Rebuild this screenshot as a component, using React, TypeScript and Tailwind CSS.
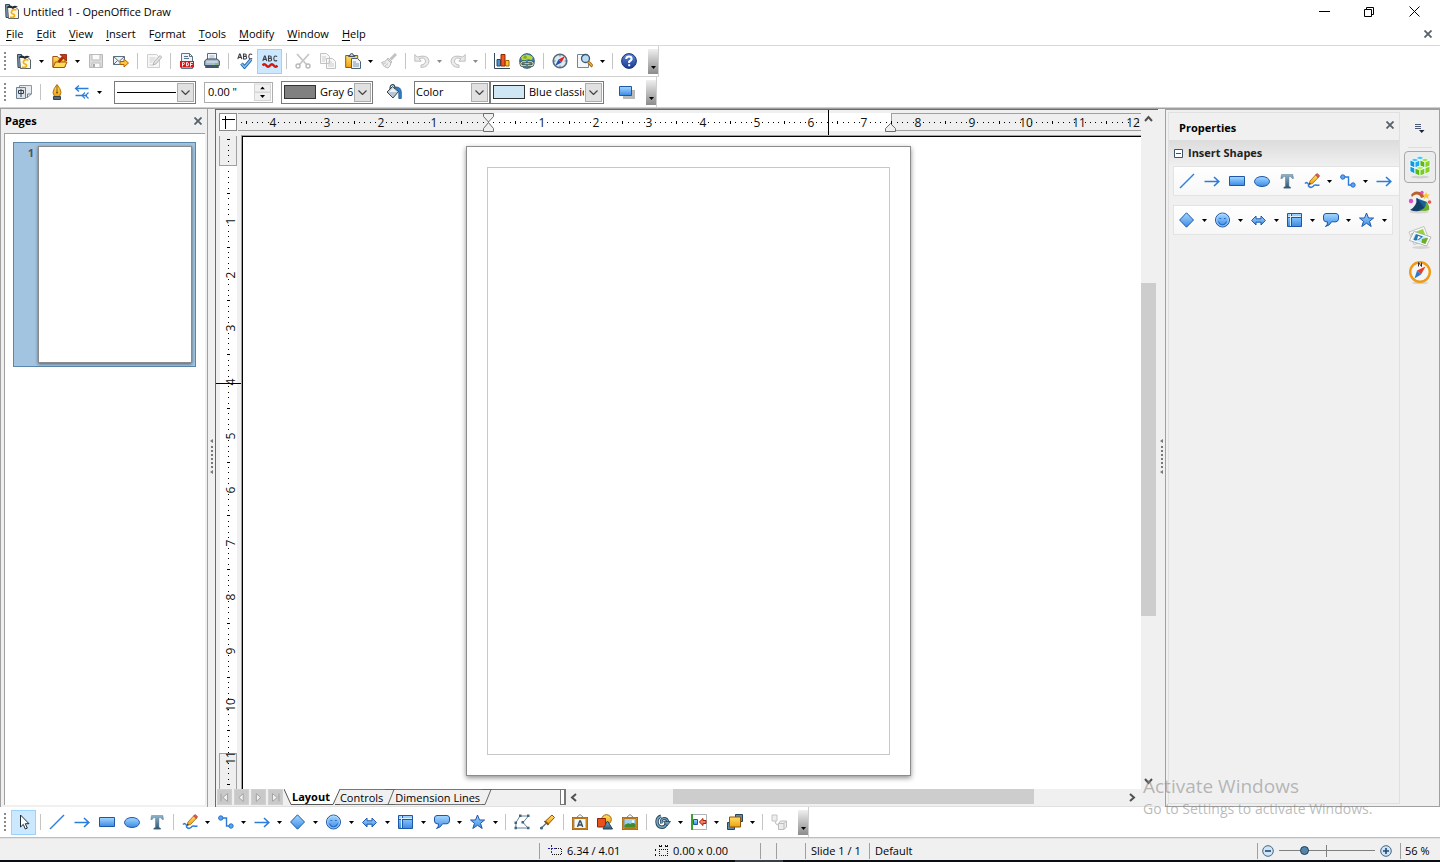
import { Fragment, type ReactNode } from "react";

const BLUE = "url(#blueFill)";
const EDGE = "#1f57a8";

function Svg({ children, size = 16, box = 16 }: { children: ReactNode; size?: number; box?: number }) {
  return (
    <svg width={size} height={size} viewBox={`0 0 ${box} ${box}`} fill="none" className="block shrink-0" aria-hidden="true">
      {children}
    </svg>
  );
}

function Defs() {
  return (
    <svg width="0" height="0" className="absolute" aria-hidden="true">
      <defs>
        <linearGradient id="blueFill" x1="0" y1="0" x2="0" y2="1">
          <stop offset="0" stopColor="#a5d8ff" />
          <stop offset="1" stopColor="#3b8ae6" />
        </linearGradient>
        <linearGradient id="goldFill" x1="0" y1="0" x2="0" y2="1">
          <stop offset="0" stopColor="#ffe066" />
          <stop offset="1" stopColor="#f0a010" />
        </linearGradient>
        <linearGradient id="slateFill" x1="0" y1="0" x2="0" y2="1">
          <stop offset="0" stopColor="#8fb4cc" />
          <stop offset="1" stopColor="#2c5470" />
        </linearGradient>
        <linearGradient id="navyFill" x1="0" y1="0" x2="0" y2="1">
          <stop offset="0" stopColor="#5d86d8" />
          <stop offset="1" stopColor="#173b94" />
        </linearGradient>
      </defs>
    </svg>
  );
}

const icons = {
  draw: (
    <>
      <path d="M1.500 1.500h4v13h-3.500z" fill="#7f9cb4" stroke="#35495a" />
      <path d="M3.500 4.500h8.500l2.500 2.500v8.500h-10z" fill="#fff8e0" stroke="#56626d" />
      <path d="M2.500 5q1-3 4-2.500 1.500.3 2 1Q11 2 14 4q-3 0-5 2Q6 3.500 2.500 5z" fill="#1f2b36" />
      <path d="M12.500 7q-4-1-5 1.500-.5 2 1.500 2.500 2.500 1 1 2.700-2 1.300-4 .3" stroke="#f5ad16" strokeWidth="1.700" />
    </>
  ),
  open: (
    <>
      <path d="M.8 14V3.500h4.700l1.200 1.700H13V14z" fill="url(#goldFill)" stroke="#a3520a" />
      <path d="M1 14.500L3.500 9h11.500L12.500 14.500z" fill="#ffd95a" stroke="#a3520a" />
      <path d="M6.500 9L11 4.500" stroke="#a82a06" strokeWidth="2.600" />
      <path d="M8 1.500h6.500V8z" fill="#c8390c" stroke="#8c1d04" strokeWidth=".8" />
    </>
  ),
  save: (
    <>
      <path d="M1.500 1.500h13v13h-13z" fill="#dcdcdc" stroke="#b8b8b8" />
      <path d="M4 1.500h8V7H4zM4 10h8v4.500H4z" fill="#fafafa" stroke="#bdbdbd" />
      <path d="M6 11v3" stroke="#aaa" strokeWidth="2" />
    </>
  ),
  mail: (
    <>
      <path d="M.5 3.500h11v8H.5z" fill="#edf2f6" stroke="#5c6f7f" />
      <path d="M.5 3.500L6 8.500l5.500-5M.5 11.500L4.500 7.500" stroke="#5c6f7f" />
      <path d="M7 8.500h4V6l4.500 4-4.500 4v-2.500H7z" fill="#ffc636" stroke="#b5600c" />
    </>
  ),
  edit: (
    <>
      <path d="M1.500 1.500h9l3 3v10h-12z" fill="#f7f7f7" stroke="#cfcfcf" />
      <path d="M3.500 5h6M3.500 7h5M3.500 9h3M3.500 12h4" stroke="#cfcfcf" />
      <path d="M7 12l1-3L14 2.500l1.800 1.800L9.800 11z" fill="#e2e2e2" stroke="#b3b3b3" />
    </>
  ),
  pdf: (
    <>
      <path d="M2.500.5h8l3 3v12h-11z" fill="#eef3f7" stroke="#5f7488" />
      <path d="M10.500.5v3h3M5 3.500h4M5 5.500h5" stroke="#5f7488" />
      <path d="M1 8h14v6.500H1z" fill="#dd1414" />
      <path d="M3.500 13.500v-4h1q1 0 1 1t-1 1h-1M7.500 9.500v3.500q2.500 0 2-2T7.500 9.500zM11.500 13.500v-4h2.500M11.500 11.500h2" stroke="#fff" strokeWidth=".9" />
    </>
  ),
  print: (
    <>
      <path d="M3.500.5h9V7h-9z" fill="#f6f9fb" stroke="#586e80" />
      <path d="M5.500 3h5M5.500 5h5" stroke="#9cb3c3" />
      <path d="M.7 8l2-2h10.600l2 2v4.500H.7z" fill="#a9bbc8" stroke="#34495a" />
      <path d="M1.200 12h13.600v3H1.200z" fill="#40566a" />
      <path d="M11 11h3" stroke="#63d420" strokeWidth="1.400" />
      <path d="M2.500 9h11" stroke="#e4ecf2" />
    </>
  ),
  spell: (
    <>
      <path d="M.8 6l1.700-5h.6l1.700 5M1.300 4.400h3M6.500 1v5h1.800q1.300 0 1.300-1.400T8.300 3.400H6.500h1.600q1.100 0 1.100-1.200T8 1zM15.200 1.600q-3.200-1.700-3.400 1.900.2 3.400 3.400 1.900" stroke="#3c3f49" strokeWidth="1.100" />
      <path d="M4.500 10.500l3 3.500 6.500-7.500" stroke="#1f62a8" strokeWidth="3.400" />
      <path d="M4.500 10.500l3 3.500 6.500-7.500" stroke="#7cc0f4" strokeWidth="1.500" />
    </>
  ),
  autospell: (
    <>
      <path d="M.8 8l1.700-5h.6l1.700 5M1.300 6.400h3M6.500 3v5h1.800q1.300 0 1.300-1.400T8.300 5.400H6.500h1.600q1.100 0 1.100-1.200T8 3zM15.200 3.600q-3.200-1.700-3.400 1.900.2 3.400 3.400 1.900" stroke="#3c3f49" strokeWidth="1.100" />
      <path d="M.5 12.500q1.900-2.500 3.750 0t3.750 0 3.750 0 3.750 0" stroke="#d21a10" strokeWidth="2.400" />
    </>
  ),
  cut: (
    <>
      <path d="M2 1l10 11M14 1L4 12" stroke="#c6c6c6" strokeWidth="1.800" />
      <circle cx="3" cy="13" r="2" stroke="#b8b8b8" strokeWidth="1.400" />
      <circle cx="13" cy="13" r="2" stroke="#b8b8b8" strokeWidth="1.400" />
    </>
  ),
  copy: (
    <>
      <path d="M.5.5h6l3 3v7h-9zM6.500 5.500h6l3 3v7h-9z" fill="#f8f8f8" stroke="#c2c2c2" />
      <path d="M2 4h4M2 6h4M2 8h3M8 9h4M8 11h6M8 13h6" stroke="#cdcdcd" />
    </>
  ),
  paste: (
    <>
      <path d="M.7 2.500h12v12H.7z" fill="url(#goldFill)" stroke="#8d5b0b" />
      <path d="M3.500 3.500v-1h1.500q0-2 1.700-2t1.700 2h1.600v1z" fill="#c7ced3" stroke="#4a5661" />
      <path d="M6.500 5.500h6l3 3v7h-9z" fill="#f1f5f9" stroke="#4b6478" />
      <path d="M8 9h3M8 11h6M8 13h6" stroke="#7e97ab" />
    </>
  ),
  brush: (
    <>
      <path d="M15 1L9.500 6.500" stroke="#c2c2c2" strokeWidth="3" />
      <path d="M7 5l4 4-2 1-3-3.500z" fill="#dedede" stroke="#bbb" />
      <path d="M6.500 6.500Q3 9 .5 9.500 3 15 7 15q2.500-2 3-5z" fill="#ededed" stroke="#bdbdbd" />
      <path d="M2 11l3-1.500M4 13l3-2.500" stroke="#c4c4c4" />
    </>
  ),
  undo: (
    <path d="M.8 1.500v6.700h6.500L5 5.800Q11 3.500 11.500 8q0 3.500-4.500 4v2.500q8-.5 8-6.700Q14 1 3.200 4z" fill="#eaeaea" stroke="#bfbfbf" />
  ),
  redo: (
    <path d="M15.200 1.500v6.700H8.700L11 5.800Q5 3.500 4.500 8q0 3.500 4.500 4v2.500q-8-.5-8-6.700Q2 1 12.800 4z" fill="#eaeaea" stroke="#bfbfbf" />
  ),
  chart: (
    <>
      <path d="M.5 0v15.500H16" stroke="#33485a" />
      <path d="M3 6.500h3.500V13H3z" fill="#4a8fc6" stroke="#1f4a72" />
      <path d="M7 1.500h4V13H7z" fill="#ea5a1d" stroke="#8f2606" />
      <path d="M11.500 7.500H15V13h-3.500z" fill="#ffc32b" stroke="#a36508" />
    </>
  ),
  globe: (
    <>
      <circle cx="8" cy="8" r="7.300" fill="#4685b4" stroke="#27567c" />
      <path d="M2 4q5-5 12 0l-1.500 3L9 6 6 7.500 3 7z" fill="#b9d63c" />
      <path d="M6 2l2 2-1 2-3-1z" fill="#7fa726" />
      <path d="M7 8.800H3.500q-1.700.4-1.700 2t1.700 2H7M9 8.800h3.500q1.700.4 1.700 2t-1.700 2H9M5.500 10.800h5" stroke="#2f4a3a" strokeWidth="2.600" />
      <path d="M7 8.800H3.500q-1.700.4-1.700 2t1.700 2H7M9 8.800h3.500q1.700.4 1.700 2t-1.700 2H9M5.500 10.800h5" stroke="#e6f0d2" strokeWidth="1.100" />
    </>
  ),
  compass: (
    <>
      <circle cx="8" cy="8" r="6.800" fill="#dfe9f0" stroke="#566c80" strokeWidth="1.600" />
      <path d="M8 2v1.500M8 12.500V14M2 8h1.500M12.500 8H14" stroke="#566c80" />
      <path d="M13 3L6.500 6.500l3 3z" fill="#e2231a" />
      <path d="M3 13l3.500-6.500 3 3z" fill="#1e56b0" />
    </>
  ),
  find: (
    <>
      <path d="M.5 1.500h9l2 2v11h-11z" fill="#f5f8fa" stroke="#73879a" />
      <circle cx="8.500" cy="5.500" r="4" fill="#b9dcf4" stroke="#3d566c" strokeWidth="1.300" />
      <path d="M11.500 9l4 4.500" stroke="#9b5c0b" strokeWidth="3" />
      <path d="M11.500 9l3.800 4.200" stroke="#f6ba37" strokeWidth="1.200" />
    </>
  ),
  help: (
    <>
      <circle cx="8" cy="8" r="7.400" fill="url(#navyFill)" stroke="#173478" />
      <path d="M5.200 6q.2-2.500 2.800-2.500T10.700 6Q10.500 7.300 8.200 8.500v1.500M8.200 11.300v1.900" stroke="#fff" strokeWidth="2" />
    </>
  ),
  styles: (
    <>
      <path d="M3.500 1.500h12v8.500l-4 3.500h-8z" fill="#e9edf1" stroke="#8a97a3" />
      <path d="M11.500 13.500V10h4" stroke="#6c7b89" />
      <path d="M.5 3.500h9v11h-9z" fill="#dde3e9" stroke="#6e7e8c" />
      <path d="M2.500 6.500h5v3h-5zM5 5v8" stroke="#32414e" />
    </>
  ),
  pen: (
    <>
      <path d="M8 .5q3.500 4 4 8L10.500 12.500h-5L4 8.500Q4.500 4.500 8 .5z" fill="url(#goldFill)" stroke="#b06f0a" />
      <path d="M8 1.500v6" stroke="#6e480c" strokeWidth=".8" />
      <circle cx="8" cy="8.500" r="1" fill="#6e480c" />
      <path d="M4.500 12.500h7v3h-7z" fill="#5a6b78" stroke="#34424e" />
    </>
  ),
  arrowstyle: (
    <>
      <path d="M14.500 4.500H1.500M5 1.500l-3.500 3L5 7.500M1.500 11.500H13" stroke="#2c7cdb" strokeWidth="1.300" />
      <path d="M11 8.500l-3 3 3 3M14.500 8.500l-3 3 3 3" stroke="#2c7cdb" strokeWidth="1.100" />
    </>
  ),
  bucket: (
    <>
      <path d="M9 3q6-.5 6.300 5v6.500h-2.500V8z" fill="#2f80c8" stroke="#1d5b9b" strokeWidth=".8" />
      <path d="M1 8l5.500-5.500 6 5-5.500 6.500z" fill="#b9c6d0" stroke="#354654" />
      <path d="M3 8l4-4 4 4z" fill="#eef3f6" />
      <path d="M4 5Q4 1 6.500.7T9 5" stroke="#354654" strokeWidth="1.200" />
    </>
  ),
  shadow: (
    <>
      <path d="M4 6h12v9H4z" fill="#b9b9b9" />
      <path d="M.5 2.500h12v9H.5z" fill={BLUE} stroke={EDGE} />
    </>
  ),
  cursor: (
    <path d="M4.500 1v12l2.800-2.600 2 4.600 2-.9-2-4.400h3.700z" fill="#fff" stroke="#1e2b36" />
  ),
  line: <path d="M1 15L15 1" stroke="#2f7fdd" strokeWidth="1.400" />,
  arrow: <path d="M.5 8.500H15M10 4L14.800 8.500 10 13" stroke="#2c7cdb" strokeWidth="1.600" />,
  rect: <path d="M.5 3.500h15v9H.5z" fill={BLUE} stroke={EDGE} />,
  ellipse: <ellipse cx="8" cy="8.500" rx="7.500" ry="5" fill={BLUE} stroke={EDGE} />,
  text: (
    <path d="M2.500 1.500h11.300l.7 4h-1.300q-.8-2.200-3.300-2.200v10l1.700 1v.9H4.800v-.9l1.700-1v-10Q4 3.300 3.200 5.500H1.800z" fill="url(#slateFill)" stroke="#41677f" strokeWidth=".4" />
  ),
  pencil: (
    <>
      <path d="M1 10.500q1-1.500 2.500-.5 1.500 1 1 3 2 2.500 4.500.5 1-2 3-1.500 1 .5 3.500 0" stroke="#2c7cdb" strokeWidth="1.500" />
      <path d="M5 11.500l1-3.500 6-6.500 2.700 2.500-6.200 6.500z" fill="url(#goldFill)" stroke="#a0620b" strokeWidth=".8" />
      <path d="M11.500 2l1.700-1.500 2.500 2.300L14.200 4.500z" fill="#e75a5a" stroke="#a02c2c" strokeWidth=".6" />
      <path d="M5 11.500l.5-1.800 1.300 1.300z" fill="#222" />
    </>
  ),
  connector: (
    <>
      <path d="M3 4h5.500v8H13" stroke="#2c7cdb" strokeWidth="1.400" />
      <circle cx="2.800" cy="4" r="2.200" fill="#5aa6f2" stroke="#2a70cc" />
      <circle cx="13" cy="12" r="2.200" fill="#5aa6f2" stroke="#2a70cc" />
    </>
  ),
  diamond: <path d="M7.500.8l7 7.200-7 7.200L.6 8z" fill={BLUE} stroke={EDGE} />,
  smiley: (
    <>
      <circle cx="7.500" cy="8" r="7" fill={BLUE} stroke={EDGE} />
      <path d="M4.500 7q.8-2 1.600 0M9 7q.8-2 1.600 0M3.500 9.500q1 3.300 4 3.300t4-3.300" stroke="#1b5fc0" strokeWidth=".9" />
      <circle cx="7.500" cy="8" r="6" stroke="#c5e6ff" strokeWidth=".6" />
    </>
  ),
  dblarrow: <path d="M.6 8.500L5 4v2.800h5V4l4.400 4.500L10 13v-2.800H5V13z" fill={BLUE} stroke={EDGE} />,
  flow: (
    <>
      <path d="M.5 1.500h14v13H.5z" fill={BLUE} stroke={EDGE} />
      <path d="M4.500 1.500v13M.5 5.500h14" stroke={EDGE} />
      <path d="M3.500 2v12M1 4.500h13" stroke="#d8efff" />
    </>
  ),
  callout: (
    <path d="M3 1.500h10q2.500.3 2.500 2.500v3q-.3 2.500-2.500 2.800H8.500Q7 13.500 2.500 14.500 5 12.500 4.500 9.800H3Q.5 9.500.5 7V4Q.5 1.700 3 1.500z" fill={BLUE} stroke={EDGE} />
  ),
  star: (
    <path d="M7.500 1l2 5h5.100l-4.100 3.300 1.700 5.200-4.700-3.200-4.700 3.200 1.700-5.200L.5 6h5z" fill={BLUE} stroke={EDGE} />
  ),
  points: (
    <>
      <path d="M6 2H14.500L9 8.500 14 14H1.800L2 8.500z" stroke="#53748a" strokeWidth=".9" />
      <path d="M5 .5h2.500V3H5zM.5 7.500H3V10H.5zM.5 12.800H3v2.500H.5zM13 .5h2.500V3H13zM7.500 7H10v2.500H7.500zM13 12.800h2.500v2.500H13z" fill="#3f6680" />
    </>
  ),
  glue: (
    <>
      <path d="M2 14.500l5-5" stroke="#53748a" strokeWidth="1.300" />
      <path d="M6.500 7L13 1l2.500 2.500L9.500 10z" fill="url(#goldFill)" stroke="#8b520a" />
      <path d="M5.500 7l4 4" stroke="#7a430c" strokeWidth="1.600" />
      <circle cx="2.500" cy="14" r="1.600" fill="#3f6680" />
    </>
  ),
  fontwork: (
    <>
      <path d="M5 3l3-2.500L11 3" stroke="#888" />
      <path d="M1.200 4h13.600v11H1.200z" fill="#f3f7fa" stroke="#8a4f08" strokeWidth="2.200" />
      <path d="M1.200 4h13.600v11H1.200z" stroke="#f0a524" strokeWidth=".9" />
      <path d="M5.500 13L7.700 7h.8l2.200 6M6.500 11h3.300" stroke="#2f4f66" strokeWidth="1.400" />
    </>
  ),
  gallery: (
    <>
      <circle cx="9.500" cy="5.500" r="4.800" fill="url(#goldFill)" stroke="#a0600b" />
      <path d="M.5 4.500h8v8.500h-8z" fill="#e9501c" stroke="#8b2408" />
      <path d="M10.500 7l5 8H6z" fill="url(#slateFill)" stroke="#24465d" />
    </>
  ),
  image: (
    <>
      <path d="M5 3l3-2.500L11 3" stroke="#888" />
      <path d="M1.200 4h13.600v11H1.200z" fill="#9bd2f3" stroke="#8a4f08" strokeWidth="2.200" />
      <path d="M1.200 4h13.600v11H1.200z" stroke="#f0a524" strokeWidth=".9" />
      <path d="M2.500 11q4-3 5.500-1 3-2 5.500 0v3.700h-11z" fill="#3f8c2d" />
      <circle cx="11" cy="7.500" r="1.200" fill="#fff" />
    </>
  ),
  rotate: (
    <>
      <path d="M6 2.200Q2 3.500 2 7.800 2.300 13 7 13.300q3.500-.2 4.300-4" stroke="#24465d" strokeWidth="3.400" />
      <path d="M6.500 9.500Q5.500 5 9 4.500q3.500 0 4 4" stroke="#24465d" strokeWidth="2.800" />
      <path d="M6 2.200Q2 3.500 2 7.800 2.300 13 7 13.300q3.500-.2 4.300-4" stroke="#7aa5c2" strokeWidth="1.600" />
      <path d="M6.500 9.500Q5.500 5 9 4.500q3.500 0 4 4" stroke="#7aa5c2" strokeWidth="1.200" />
      <path d="M8.500 7.500h7L12 12z" fill="#6d9ab8" stroke="#24465d" strokeWidth=".8" />
    </>
  ),
  align: (
    <>
      <path d="M1.500.5h14v15h-14z" fill="#fff" stroke="#aab4bc" />
      <path d="M1 0v16" stroke="#37a52d" strokeWidth="2" />
      <path d="M2.500 5.500h4v5h-4z" fill={BLUE} stroke={EDGE} />
      <path d="M15 6.500h-3V4.500L8.300 8l3.700 3.500v-2h3z" fill="#f08060" stroke="#a32208" strokeWidth="1" />
    </>
  ),
  arrange: (
    <>
      <path d="M8.500.5h7v7h-7zM.5 8.500h7v7h-7z" fill="#5f8baa" stroke="#24465d" />
      <path d="M2.500 3h11v10h-11z" fill="url(#goldFill)" stroke="#8f5208" />
    </>
  ),
  extrude: (
    <>
      <path d="M1 1h5v6H1zM4 7q0 4 4 4.500" fill="#eee" stroke="#c3c3c3" />
      <path d="M7.500 9.500l2-2.500h6v6l-2.500 2.500H7.500zM7.500 9.500H13v6M13 9.500L15.500 7" fill="#ececec" stroke="#bdbdbd" />
    </>
  ),
};

type IconName = keyof typeof icons;
type Item = { icon: IconName; label: string; split?: boolean; active?: boolean; muted?: boolean } | "sep";

const standard: Item[] = [
  { icon: "draw", label: "New", split: true },
  { icon: "open", label: "Open", split: true },
  { icon: "save", label: "Save" },
  { icon: "mail", label: "Document as E-mail" },
  "sep",
  { icon: "edit", label: "Edit File" },
  "sep",
  { icon: "pdf", label: "Export as PDF" },
  { icon: "print", label: "Print" },
  "sep",
  { icon: "spell", label: "Spelling" },
  { icon: "autospell", label: "AutoSpellcheck", active: true },
  "sep",
  { icon: "cut", label: "Cut" },
  { icon: "copy", label: "Copy" },
  { icon: "paste", label: "Paste", split: true },
  { icon: "brush", label: "Format Paintbrush" },
  "sep",
  { icon: "undo", label: "Undo", split: true, muted: true },
  { icon: "redo", label: "Redo", split: true, muted: true },
  "sep",
  { icon: "chart", label: "Chart" },
  { icon: "globe", label: "Hyperlink" },
  "sep",
  { icon: "compass", label: "Navigator" },
  { icon: "find", label: "Zoom", split: true },
  "sep",
  { icon: "help", label: "Help" },
];

const drawing: Item[] = [
  { icon: "cursor", label: "Select", active: true },
  "sep",
  { icon: "line", label: "Line" },
  { icon: "arrow", label: "Line Ends with Arrow" },
  { icon: "rect", label: "Rectangle" },
  { icon: "ellipse", label: "Ellipse" },
  { icon: "text", label: "Text" },
  "sep",
  { icon: "pencil", label: "Curve", split: true },
  { icon: "connector", label: "Connector", split: true },
  { icon: "arrow", label: "Lines and Arrows", split: true },
  { icon: "diamond", label: "Basic Shapes", split: true },
  { icon: "smiley", label: "Symbol Shapes", split: true },
  { icon: "dblarrow", label: "Block Arrows", split: true },
  { icon: "flow", label: "Flowcharts", split: true },
  { icon: "callout", label: "Callouts", split: true },
  { icon: "star", label: "Stars", split: true },
  "sep",
  { icon: "points", label: "Edit Points" },
  { icon: "glue", label: "Glue Points" },
  "sep",
  { icon: "fontwork", label: "Fontwork Gallery" },
  { icon: "gallery", label: "Gallery" },
  { icon: "image", label: "From File" },
  "sep",
  { icon: "rotate", label: "Rotate", split: true },
  { icon: "align", label: "Alignment", split: true },
  { icon: "arrange", label: "Arrange", split: true },
  "sep",
  { icon: "extrude", label: "Extrusion" },
];

const shapesTop: Item[] = [
  ...drawing.slice(2, 7),
  ...drawing.slice(8, 10),
  { icon: "arrow", label: "Lines and Arrows" },
];
const shapesBottom: Item[] = drawing.slice(11, 17);

function Down({ muted = false }: { muted?: boolean }) {
  return (
    <svg width="5" height="3" viewBox="0 0 5 3" className="block" aria-hidden="true">
      <path d="M0 0h5L2.500 3z" fill={muted ? "#8a8a8a" : "#000"} />
    </svg>
  );
}

function Tools({ items }: { items: Item[] }) {
  return (
    <>
      {items.map((item, i) =>
        item === "sep" ? (
          <span key={i} className="mx-[3px] h-4 w-0.5 border-r border-[#c4c4c4]" />
        ) : (
          <Fragment key={i}>
            <button
              aria-label={item.label}
              className={
                item.active
                  ? "flex h-[25px] w-[25px] shrink-0 items-center justify-center border border-[#99d1ff] bg-[#cce8ff]"
                  : "flex h-[25px] w-[25px] shrink-0 items-center justify-center"
              }
            >
              <Svg>{icons[item.icon]}</Svg>
            </button>
            {item.split && (
              <button aria-label={`${item.label} options`} className="flex h-[25px] w-[11px] shrink-0 items-center justify-center">
                <Down muted={item.muted} />
              </button>
            )}
          </Fragment>
        ),
      )}
    </>
  );
}

function Grip() {
  return (
    <svg width="2" height="18" viewBox="0 0 2 18" className="ml-1 mr-[5px] shrink-0" shapeRendering="crispEdges" aria-hidden="true">
      <path d="M1 0v18" stroke="#8a8a8a" strokeWidth="2" strokeDasharray="2 2" />
    </svg>
  );
}

function Overflow() {
  return (
    <button aria-label="More controls" className="ml-[7px] flex h-[25px] w-[10px] items-end justify-center bg-linear-to-b from-[#f0f0f0] to-[#8c8c8c] pb-[5px]">
      <Down />
    </button>
  );
}

function Chevron() {
  return (
    <span className="pointer-events-none m-px flex w-[17px] shrink-0 items-center justify-center border border-[#adadad] bg-[#e1e1e1]">
      <svg width="9" height="5" viewBox="0 0 9 5" fill="none" aria-hidden="true">
        <path d="M.5.5l4 4 4-4" stroke="#444" strokeWidth="1.200" />
      </svg>
    </span>
  );
}

function Combo({ label, value, swatch, width }: { label: string; value: string; swatch?: string; width: string }) {
  return (
    <div className={`flex h-[23px] shrink-0 border border-[#7a7a7a] bg-white ${width}`}>
      {swatch && <span className={`ml-0.5 mr-[3px] h-[14px] w-[32px] shrink-0 self-center border border-[#333] ${swatch}`} />}
      <select aria-label={label} className="min-w-0 flex-1 appearance-none overflow-hidden bg-transparent pl-px outline-none">
        <option>{value}</option>
      </select>
      <Chevron />
    </div>
  );
}

function CloseX() {
  return (
    <svg width="8" height="8" viewBox="0 0 8 8" fill="none" aria-hidden="true">
      <path d="M.5.5l7 7M7.500.5l-7 7" stroke="#56616b" strokeWidth="1.800" />
    </svg>
  );
}

const menus = [
  ["", "F", "ile"],
  ["", "E", "dit"],
  ["", "V", "iew"],
  ["", "I", "nsert"],
  ["F", "o", "rmat"],
  ["", "T", "ools"],
  ["", "M", "odify"],
  ["", "W", "indow"],
  ["", "H", "elp"],
];

const INCH = 53.75;

function ticks(from: number, to: number) {
  const list: { pos: number; kind: "num" | "half" | "dot"; n: number }[] = [];
  for (let t = from; t <= to; t++) {
    const rem = Math.abs(t) % 10;
    list.push({ pos: Math.round((t * INCH) / 10), kind: rem === 0 ? "num" : rem === 5 ? "half" : "dot", n: Math.abs(t) / 10 });
  }
  return list;
}

function HorizontalRuler() {
  const zero = 250;
  return (
    <svg height="26" className="block min-w-0 flex-1 overflow-hidden font-['Open_Sans','Noto_Sans',sans-serif] text-xs" aria-label="Horizontal ruler" shapeRendering="crispEdges">
      <rect x="0" y="3" width="100%" height="18" fill="#fff" />
      <rect x="-2" y="3.500" width="252" height="17" fill="#efefef" stroke="#a0a0a0" />
      <rect x="653.500" y="3.500" width="3000" height="17" fill="#efefef" stroke="#a0a0a0" />
      {ticks(-46, 125).map(({ pos, kind, n }) =>
        kind === "num" ? (
          n !== 0 && (
            <text key={pos} x={zero + pos} y="17" textAnchor="middle" fill="#111">
              {n}
            </text>
          )
        ) : (
          <rect key={pos} x={zero + pos} y={kind === "half" ? 11 : 12} width="1" height={kind === "half" ? 3 : 1} fill="#000" />
        ),
      )}
      <rect x="3" y="25" width="100%" height="1" fill="#a0a0a0" />
      <g fill="#f0f0f0" stroke="#6b6b6b" shapeRendering="auto">
        <path d="M245.500 3.500h10v3l-5 5.500-5-5.500zM245.500 21.500h10v-3l-5-6-5 6z" />
        <path d="M647.500 21.500h10v-3l-5-5-5 5z" />
      </g>
      <rect x="590" y="0" width="1" height="25" fill="#000" />
    </svg>
  );
}

function VerticalRuler() {
  const zero = 30;
  return (
    <svg width="26" className="block shrink-0 overflow-hidden font-['Open_Sans','Noto_Sans',sans-serif] text-xs" aria-label="Vertical ruler" shapeRendering="crispEdges">
      <rect x="4" y="0" width="17" height="100%" fill="#fff" />
      <rect x="3.500" y="-2" width="17" height="31.500" fill="#efefef" stroke="#a0a0a0" />
      <rect x="3.500" y="617.500" width="17" height="2000" fill="#efefef" stroke="#a0a0a0" />
      {ticks(-5, 116).map(({ pos, kind, n }) =>
        kind === "num" ? (
          n !== 0 && (
            <text key={pos} transform={`translate(19 ${zero + 1 + pos}) rotate(-90)`} textAnchor="middle" fill="#111">
              {n}
            </text>
          )
        ) : (
          <rect key={pos} x={kind === "half" ? 11 : 12} y={zero + pos} width={kind === "half" ? 3 : 1} height="1" fill="#000" />
        ),
      )}
      <rect x="0" y="247" width="26" height="1" fill="#000" />
      <rect x="25" y="0" width="1" height="100%" fill="#a0a0a0" />
    </svg>
  );
}

function Splitter() {
  return (
    <div className="flex w-[7px] shrink-0 flex-col items-center justify-center pb-[3px]">
      <svg width="4" height="35" viewBox="0 0 4 35" aria-hidden="true" fill="#777">
        <path d="M3 0v4L0 2zM3 31v4l-3-2z" />
        {[7, 11, 15, 19, 23, 27].map((y) => (
          <rect key={y} x="1" y={y} width="2" height="2" />
        ))}
      </svg>
    </div>
  );
}

function PagesPane() {
  return (
    <aside className="flex w-[208px] shrink-0 flex-col border-x border-[#a0a0a0] pb-0.5">
      <div className="flex h-6 items-center justify-between pl-1 pr-[5px]">
        <h2 className="font-bold">Pages</h2>
        <button aria-label="Close pages pane">
          <CloseX />
        </button>
      </div>
      <div className="ml-[3px] mr-0.5 flex-1 border-l border-t border-[#a0a0a0] bg-white pl-2 pt-2">
        <button className="flex h-[225px] w-[183px] items-start border border-[#5a87ad] bg-[#a2c4e0] pt-[3px]">
          <span className="w-6 pr-1 pt-px text-right font-bold leading-3 text-[#50555a]">1</span>
          <span className="h-[217px] w-[154px] border border-[#8a8a8a] bg-white shadow-[0_1px_3px_#00000080]" />
        </button>
      </div>
    </aside>
  );
}

const scrollPaths = {
  up: "M1 6l3.500-4L8 6",
  down: "M1 3l3.500 4L8 3",
  left: "M6 1L2 4.500 6 8",
  right: "M3 1l4 3.500L3 8",
};

function ScrollArrow({ dir, size }: { dir: keyof typeof scrollPaths; size: string }) {
  return (
    <button aria-label={`Scroll ${dir}`} className={`flex shrink-0 items-center justify-center ${size}`}>
      <svg width="9" height="9" viewBox="0 0 9 9" fill="none" aria-hidden="true">
        <path d={scrollPaths[dir]} stroke="#505050" strokeWidth="2" />
      </svg>
    </button>
  );
}

const navIcons = [
  { label: "First", d: "M3.500 3v9M11 3v9L5.500 7.500z" },
  { label: "Previous", d: "M9.500 3v9L4.500 7.500z" },
  { label: "Next", d: "M5 3v9l5-4.500z" },
  { label: "Last", d: "M4 3v9l5.500-4.500zM11.500 3v9" },
];

function LayerTabs() {
  return (
    <div className="flex w-[350px] shrink-0">
      <div className="flex gap-0.5 px-px">
        {navIcons.map((nav) => (
          <button key={nav.label} aria-label={nav.label} className="h-4 w-[15px] border border-[#d0d0d0] bg-[#c9c9c9]">
            <svg width="13" height="13" viewBox="0 0 15 15" aria-hidden="true">
              <path d={nav.d} fill="#f0f0f0" stroke="#9a9a9a" />
            </svg>
          </button>
        ))}
      </div>
      <div className="flex h-4 flex-1 items-stretch">
        <svg width="8" height="16" aria-hidden="true">
          <path d="M0 0l7 15.500h1V0z" fill="#fff" />
          <path d="M0 0l7 15.500h1" fill="none" stroke="#555" />
        </svg>
        <button className="flex items-center border-b border-[#555] bg-white font-bold">Layout</button>
        <svg width="10" height="16" aria-hidden="true">
          <path d="M0 0h10L3 16H0z" fill="#fff" />
          <path d="M0 15.500h3L10 0M5 15.500h5" fill="none" stroke="#555" />
        </svg>
        <button className="flex items-center border-y border-[#777] pr-0.5 leading-none">Controls</button>
        <svg width="10" height="16" aria-hidden="true">
          <path d="M0 15.500h3L9 .5M0 .5h10M3 15.500h7" fill="none" stroke="#666" />
        </svg>
        <button className="flex items-center border-y border-[#777] pr-0.5 leading-none">Dimension Lines</button>
        <svg width="10" height="16" aria-hidden="true">
          <path d="M0 15.500h3L9 .5M0 .5h10" fill="none" stroke="#666" />
        </svg>
        <span className="flex-1 border-t border-[#777]" />
        <span className="w-[6px] border border-r-2 border-[#777] bg-white" />
      </div>
    </div>
  );
}

function Document() {
  return (
    <main className="flex min-w-0 flex-1 flex-col border-l border-t border-[#696969]">
      <div className="flex flex-1">
        <div className="flex min-w-0 flex-1 flex-col">
          <div className="flex h-[26px] shrink-0">
            <button aria-label="Ruler origin" className="ml-[3px] mr-px mt-[3px] h-[18px] w-[18px] border border-[#8a8a8a] bg-white">
              <svg width="16" height="16" viewBox="0 0 16 16" aria-hidden="true" shapeRendering="crispEdges">
                <path d="M2 5.500h13M5.500 2v13" stroke="#000" />
              </svg>
            </button>
            <HorizontalRuler />
          </div>
          <div className="flex flex-1">
            <VerticalRuler />
            <div className="min-w-0 flex-1 border-l border-t border-black bg-white pl-[223px] pt-[9px]">
              <div className="flex h-[630px] w-[445px] border border-[#8c8c8c] bg-white p-5 shadow-[0_2px_5px_#00000070]">
                <div className="flex-1 border border-[#c8c8c8]" />
              </div>
            </div>
          </div>
        </div>
        <div className="flex w-[17px] shrink-0 flex-col">
          <ScrollArrow dir="up" size="h-[18px] w-[15px]" />
          <span className="flex-[155]" />
          <span className="mr-0.5 flex-[334] bg-[#cdcdcd]" />
          <span className="flex-[155]" />
          <ScrollArrow dir="down" size="h-[18px] w-[15px]" />
        </div>
      </div>
      <div className="flex h-[18px] shrink-0 border-b border-[#e0e0e0] bg-[#f0f0f0]">
        <LayerTabs />
        <div className="mb-0.5 flex flex-1">
          <ScrollArrow dir="left" size="h-4 w-[17px]" />
          <span className="flex-[90]" />
          <span className="flex-[363] bg-[#cdcdcd]" />
          <span className="flex-[90]" />
          <ScrollArrow dir="right" size="h-4 w-[17px]" />
          <span className="w-[18px]" />
        </div>
      </div>
    </main>
  );
}

function Sidebar() {
  return (
    <aside className="flex w-[275px] shrink-0 border border-[#a0a0a0]">
      <section className="mb-0.5 ml-0.5 mt-0.5 flex flex-1 flex-col border border-[#e0e0e0]">
        <div className="flex h-[27px] items-center justify-between pl-[10px] pr-[5px]">
          <h2 className="pt-0.5 font-bold">Properties</h2>
          <button aria-label="Close sidebar" className="pb-1">
            <CloseX />
          </button>
        </div>
        <div className="flex h-[26px] items-center bg-linear-to-b from-[#dcdcdc] to-[#f0f0f0] pl-[5px]">
          <button className="flex items-center gap-[5px] font-bold text-[#222]">
            <svg width="9" height="9" viewBox="0 0 9 9" fill="#fff" aria-hidden="true">
              <path d="M.5.5h8v8h-8zM2 4.500h5" stroke="#3d5266" />
            </svg>
            Insert Shapes
          </button>
        </div>
        <div className="ml-1 flex h-[30px] items-center border border-r-0 border-[#e3e3e3] bg-linear-to-b from-white to-[#f7f7f7]">
          <Tools items={shapesTop} />
        </div>
        <div className="ml-1 mr-[6px] mt-[9px] flex h-[30px] items-center border border-[#e3e3e3] bg-linear-to-b from-white to-[#f7f7f7]">
          <Tools items={shapesBottom} />
        </div>
      </section>
      <nav className="flex w-[39px] shrink-0 flex-col items-center">
        <button aria-label="Sidebar settings" className="flex h-[37px] items-center justify-center">
          <svg width="11" height="11" viewBox="0 0 11 11" fill="none" aria-hidden="true">
            <path d="M1 1.500h6M1 3.500h6M1 5.500h6" stroke="#4a5a78" />
            <path d="M5 7h5.500L7.700 10z" fill="#1a2338" />
          </svg>
        </button>
        <span className="mb-[3px] h-px w-6 bg-[#dcdcdc]" />
        <button aria-label="Properties deck" className="flex h-8 w-8 items-center justify-center rounded border border-[#a8a8a8] bg-[#ececec]">
          <Svg size={24} box={24}>
            <ellipse cx="12" cy="22" rx="9" ry="1.500" fill="#d0d0d0" />
            <g stroke="#eefaff" strokeWidth=".9">
              <path d="M2 5l5-2 5 2-5 2zM7 3l5-2 5 2-5 2z" fill="#4cc3f7" />
              <path d="M2 5l5 2v6l-5-2zM2 11l5 2v6l-5-2.500z" fill="#0d9be0" />
              <path d="M7 7l5-2v6l-5 2z" fill="#1fa9ec" />
              <path d="M12 5l5-2 5 2-5 2z" fill="#a5e636" />
              <path d="M12 5l5 2v6l-5-2z" fill="#5db815" />
              <path d="M17 7l5-2v6l-5 2z" fill="#86d322" />
              <path d="M7 13l5-2 5 2-5 2z" fill="#b5ee4a" />
              <path d="M7 13l5 2v6l-5-2z" fill="#5db815" />
              <path d="M12 15l5-2v6l-5 2z" fill="#7acb1c" />
              <path d="M17 13l5-2v6l-5 2z" fill="#86d322" />
            </g>
          </Svg>
        </button>
        <button aria-label="Gallery deck" className="flex h-[37px] w-8 items-center justify-center">
          <Svg size={24} box={24}>
            <ellipse cx="11" cy="22" rx="10" ry="1.500" fill="#d5d5d5" />
            <path d="M3 5q3-5 9-3 4 1 4 5l-3 1q-1-4-5-3.500Q5 5 4 7z" fill="#b9602a" />
            <path d="M8 8l11 4q2 5-1 8-6 0-8-1z" fill="#1b5f98" />
            <path d="M2 20q7-4 7-12l8 11q-7 4-15 1z" fill="#143f66" />
            <path d="M11 20q7 0 7-8 4 3 3 8-4 2-10 0z" fill="#6cae2a" />
            <path d="M18 2l1.200 2.500H22l-2 1.700.8 2.600L18.200 7.500 15.800 9l.6-2.800-2-1.700h2.700z" fill="#ffc42c" />
            <g fill="#e24bd0">
              <circle cx="14" cy="2.500" r="1.700" />
              <circle cx="3" cy="11" r="2.200" />
              <circle cx="21.500" cy="12" r="1.800" fill="#f05252" />
            </g>
          </Svg>
        </button>
        <button aria-label="Images deck" className="flex h-[34px] w-8 items-center justify-center">
          <Svg size={24} box={24}>
            <ellipse cx="13" cy="22.500" rx="9" ry="1.500" fill="#d5d5d5" />
            <path d="M1 7l15-5.500 5 13-15 5z" fill="#f7f7f7" stroke="#b8b8b8" strokeWidth=".8" />
            <path d="M3 8.500L15 4l3 8-12 5z" fill="#9ad23b" />
            <path d="M6 6.500l17 5.500-4.500 9-17-5.500z" fill="#fff" stroke="#a6a6a6" strokeWidth=".8" />
            <path d="M7 8.500l13.500 4.300-3 6.200L4 14.700z" fill="#c3e7f8" />
            <path d="M14 14l4.500-1 1.500 0-2.500 6-4-1.300z" fill="#6cae2a" />
            <path d="M8 9l7 2.500-3.500 3-4 1-2-.8z" fill="#2a75b0" />
            <path d="M10 11l3 1-4 3z" fill="#fff" />
          </Svg>
        </button>
        <button aria-label="Navigator deck" className="flex h-9 w-8 items-center justify-center">
          <Svg size={24} box={24}>
            <ellipse cx="12" cy="23" rx="8" ry="1" fill="#d0d0d0" />
            <circle cx="12" cy="12" r="9.800" fill="#f3f5f6" stroke="#f09a16" strokeWidth="2.400" />
            <path d="M10.500 6.500V2.500l3 4v-4" stroke="#333" strokeWidth="1" />
            <path d="M17.500 6.500l-8.500 4 4 4z" fill="#e2402a" />
            <path d="M6.500 18.500l2.500-8 4 4z" fill="#2c78c8" />
          </Svg>
        </button>
      </nav>
    </aside>
  );
}

function StatusBar() {
  return (
    <footer className="flex h-[22px] shrink-0 items-center border-t border-[#e2e2e2] bg-[#f0f0f0] pt-0.5">
      <span className="w-[539px] shrink-0" />
      <div className="flex h-4 w-[221px] shrink-0 items-center border-l border-[#a0a0a0] pl-2">
        <svg width="14" height="12" viewBox="0 0 14 12" fill="none" shapeRendering="crispEdges" aria-hidden="true">
          <path d="M3.500 0v8M0 3.500h8" stroke="#2222bb" strokeDasharray="2 1" />
          <path d="M8 3.500h6M13.500 4v6M4 9.500h10" stroke="#111" strokeDasharray="1 1" />
        </svg>
        <span className="ml-[5px] w-[87px]">6.34 / 4.01</span>
        <svg width="15" height="12" viewBox="0 0 15 12" fill="none" shapeRendering="crispEdges" aria-hidden="true">
          <path d="M5.500 4v7M13.500 4v7M5 4.500h9M5 10.500h9" stroke="#111" strokeDasharray="1 1" />
          <path d="M5.500 0v2M7.500 0v2M11.500 0v2M13.500 0v2M6 1.500h2M11 1.500h2M1.500 4v2M1.500 9v2" stroke="#111" />
        </svg>
        <span className="ml-1">0.00 x 0.00</span>
      </div>
      <span className="h-4 w-4 shrink-0 border-l border-[#a0a0a0]" />
      <span className="h-4 w-[29px] shrink-0 border-l border-[#a0a0a0]" />
      <span className="flex h-4 w-16 shrink-0 items-center whitespace-nowrap border-l border-[#a0a0a0] pl-[5px]">Slide 1 / 1</span>
      <span className="flex h-4 flex-1 items-center border-l border-[#a0a0a0] pl-[5px]">Default</span>
      <div className="flex h-4 w-[143px] shrink-0 items-center border-l border-[#a0a0a0] pl-1">
        <button aria-label="Zoom out">
          <Svg size={12} box={12}>
            <circle cx="6" cy="6" r="5.300" fill="#cfe4f6" stroke="#456480" />
            <path d="M3 6h6" stroke="#1d4a7a" strokeWidth="1.600" />
          </Svg>
        </button>
        <div className="relative mx-[5px] flex h-3 w-[96px] items-center">
          <span className="absolute left-[47px] top-0 h-3 w-px bg-[#808080]" />
          <input
            type="range"
            aria-label="Zoom"
            defaultValue={24}
            className="relative h-px w-full appearance-none bg-[#808080] [&::-webkit-slider-thumb]:h-[9px] [&::-webkit-slider-thumb]:w-[9px] [&::-webkit-slider-thumb]:appearance-none [&::-webkit-slider-thumb]:rounded-full [&::-webkit-slider-thumb]:border [&::-webkit-slider-thumb]:border-[#1e3f5a] [&::-webkit-slider-thumb]:bg-[#5684a8]"
          />
        </div>
        <button aria-label="Zoom in">
          <Svg size={12} box={12}>
            <circle cx="6" cy="6" r="5.300" fill="#cfe4f6" stroke="#456480" />
            <path d="M3 6h6M6 3v6" stroke="#1d4a7a" strokeWidth="1.600" />
          </Svg>
        </button>
      </div>
      <span className="flex h-4 w-10 shrink-0 items-center whitespace-nowrap border-l border-[#a0a0a0] pl-1">56 %</span>
    </footer>
  );
}

export default function App() {
  return (
    <div className="relative flex min-h-screen flex-col overflow-hidden bg-white font-['Open_Sans','Noto_Sans',sans-serif] text-[11px] leading-4 text-black">
      <Defs />
      <header>
        <div className="flex h-[22px] items-center pl-1">
          <Svg>{icons.draw}</Svg>
          <h1 className="ml-[3px] flex-1 pt-px">Untitled 1 - OpenOffice Draw</h1>
          <div className="flex pr-[3px]">
            {["M0 5.500h11", "M.5 3.500h7v7h-7zM2.500 3V1.500h7v7H8", "M.5.500l10 10M10.500.500l-10 10"].map((d, i) => (
              <button key={d} aria-label={["Minimize", "Restore", "Close"][i]} className="flex w-[45px] items-center justify-center">
                <svg width="11" height="11" viewBox="0 0 11 11" fill="none" aria-hidden="true">
                  <path d={d} stroke="#000" />
                </svg>
              </button>
            ))}
          </div>
        </div>
        <nav className="flex h-6 items-center border-b border-[#d9d9d9] pl-[6px] pr-2">
          <div className="flex flex-1 gap-[13px]">
            {menus.map(([a, b, c]) => (
              <button key={b}>
                {a}
                <span className="underline underline-offset-2">{b}</span>
                {c}
              </button>
            ))}
          </div>
          <button aria-label="Close document">
            <CloseX />
          </button>
        </nav>
      </header>

      <div className="flex">
        <div role="toolbar" aria-label="Standard" className="flex h-[31px] items-center border-b border-r border-[#cfcfcf]">
          <Grip />
          <Tools items={standard} />
          <Overflow />
        </div>
      </div>

      <div className="flex border-b border-[#cfcfcf]">
        <div role="toolbar" aria-label="Line and Filling" className="flex h-[30px] items-center border-r border-[#cfcfcf]">
          <Grip />
          <Tools items={[{ icon: "styles", label: "Styles" }, "sep", { icon: "pen", label: "Line" }, { icon: "arrowstyle", label: "Arrow Style", split: true }]} />
          <div className="ml-[9px] flex h-[23px] w-[82px] border border-[#7a7a7a]">
            <span className="ml-0.5 h-px w-[59px] self-center bg-black" />
            <select aria-label="Line Style" className="w-0 min-w-0 flex-1 appearance-none bg-transparent" />
            <Chevron />
          </div>
          <div className="ml-2 flex h-[21px] w-[69px] border border-[#adadad]">
            <input aria-label="Line Width" defaultValue={'0.00 "'} className="w-0 min-w-0 flex-1 pl-[3px] outline-none" />
            <div className="m-px flex w-[17px] flex-col bg-[#f0f0f0]">
              <button aria-label="Increase" className="flex flex-1 rotate-180 items-center justify-center border border-[#d5d5d5]">
                <Down />
              </button>
              <button aria-label="Decrease" className="flex flex-1 items-center justify-center border border-[#d5d5d5]">
                <Down />
              </button>
            </div>
          </div>
          <span className="w-2" />
          <Combo label="Line Color" value="Gray 6" swatch="bg-[#808080]" width="w-[92px]" />
          <span className="w-2" />
          <Tools items={[{ icon: "bucket", label: "Area" }]} />
          <span className="w-2" />
          <Combo label="Area Style" value="Color" width="w-[76px]" />
          <Combo label="Area Filling" value="Blue classic" swatch="bg-[#cfe7f5]" width="w-[114px]" />
          <span className="w-[10px]" />
          <Tools items={[{ icon: "shadow", label: "Shadow" }]} />
          <Overflow />
        </div>
      </div>

      <div className="flex flex-1 border-t border-[#a0a0a0] bg-[#f0f0f0]">
        <PagesPane />
        <Splitter />
        <Document />
        <Splitter />
        <Sidebar />
      </div>

      <div className="flex border-b border-[#bdbdbd]">
        <div role="toolbar" aria-label="Drawing" className="flex h-[30px] items-center border-r border-[#cfcfcf]">
          <Grip />
          <Tools items={drawing} />
          <Overflow />
        </div>
      </div>

      <StatusBar />
      <div className="flex h-0.5 bg-[#0a0d12]">
        <span className="ml-[735px] w-12 bg-[#3a3f45]" />
      </div>

      <div className="pointer-events-none absolute bottom-[42px] left-[1143px] whitespace-nowrap text-[#8c8c8c]/60">
        <p className="text-[19px] leading-6">Activate Windows</p>
        <p className="text-[14px] leading-[22px]">Go to Settings to activate Windows.</p>
      </div>
    </div>
  );
}
